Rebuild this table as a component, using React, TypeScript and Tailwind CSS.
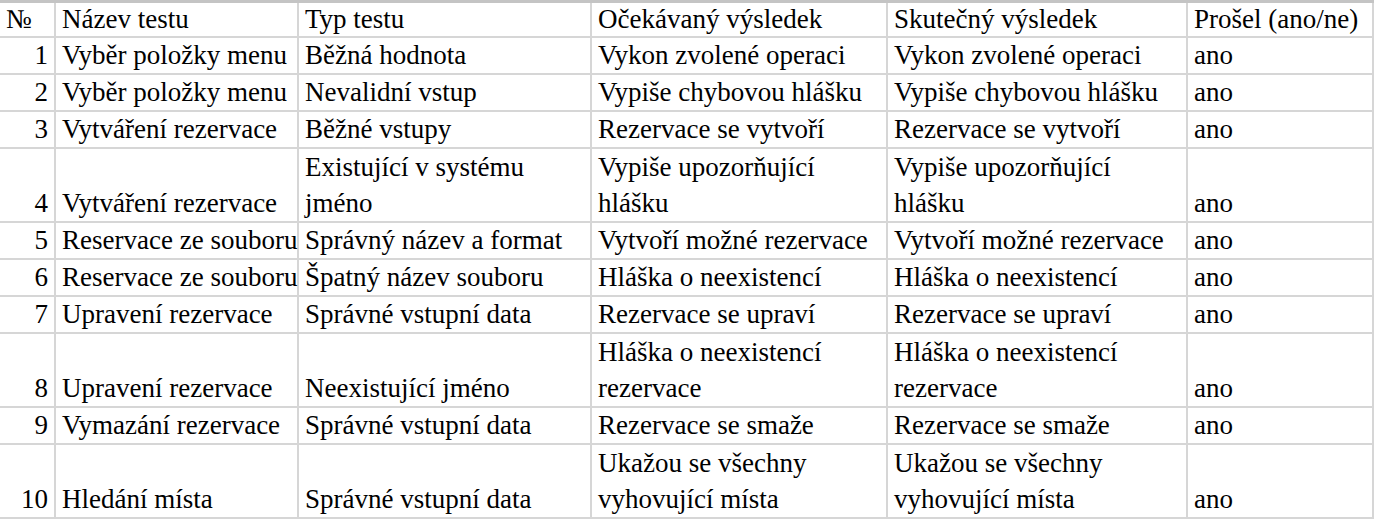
import React from 'react';

type Row = {
  n: number;
  name: string[];
  type: string[];
  expected: string[];
  actual: string[];
  passed: string;
};

const rows: Row[] = [
  { n: 1, name: ['Vyběr položky menu'], type: ['Běžná hodnota'], expected: ['Vykon zvolené operaci'], actual: ['Vykon zvolené operaci'], passed: 'ano' },
  { n: 2, name: ['Vyběr položky menu'], type: ['Nevalidní vstup'], expected: ['Vypiše chybovou hlášku'], actual: ['Vypiše chybovou hlášku'], passed: 'ano' },
  { n: 3, name: ['Vytváření rezervace'], type: ['Běžné vstupy'], expected: ['Rezervace se vytvoří'], actual: ['Rezervace se vytvoří'], passed: 'ano' },
  { n: 4, name: ['Vytváření rezervace'], type: ['Existující v systému', 'jméno'], expected: ['Vypiše upozorňující', 'hlášku'], actual: ['Vypiše upozorňující', 'hlášku'], passed: 'ano' },
  { n: 5, name: ['Reservace ze souboru'], type: ['Správný název a format'], expected: ['Vytvoří možné rezervace'], actual: ['Vytvoří možné rezervace'], passed: 'ano' },
  { n: 6, name: ['Reservace ze souboru'], type: ['Špatný název souboru'], expected: ['Hláška o neexistencí'], actual: ['Hláška o neexistencí'], passed: 'ano' },
  { n: 7, name: ['Upravení rezervace'], type: ['Správné vstupní data'], expected: ['Rezervace se upraví'], actual: ['Rezervace se upraví'], passed: 'ano' },
  { n: 8, name: ['Upravení rezervace'], type: ['Neexistující jméno'], expected: ['Hláška o neexistencí', 'rezervace'], actual: ['Hláška o neexistencí', 'rezervace'], passed: 'ano' },
  { n: 9, name: ['Vymazání rezervace'], type: ['Správné vstupní data'], expected: ['Rezervace se smaže'], actual: ['Rezervace se smaže'], passed: 'ano' },
  { n: 10, name: ['Hledání místa'], type: ['Správné vstupní data'], expected: ['Ukažou se všechny', 'vyhovující místa'], actual: ['Ukažou se všechny', 'vyhovující místa'], passed: 'ano' },
];

const Lines = ({ lines }: { lines: string[] }) => (
  <>
    {lines.map((l, i) => (
      <div key={i}>{l}</div>
    ))}
  </>
);

const cell = 'border-2 border-[#d6d6d6] align-bottom whitespace-nowrap px-[6px] py-0';

export default function App() {
  return (
    <div className="w-[1374px] h-[522px] bg-white overflow-hidden text-black text-[27px] font-serif">
      <table className="table-fixed border-collapse w-[1373px] font-[family-name:'Liberation_Serif','Tinos','Noto_Serif','FreeSerif','Times_New_Roman','Times','DejaVu_Serif',serif]">
        <colgroup>
          <col className="w-[55px]" />
          <col className="w-[243px]" />
          <col className="w-[293px]" />
          <col className="w-[296px]" />
          <col className="w-[300px]" />
          <col className="w-[186px]" />
        </colgroup>
        <thead>
          <tr className="leading-[33px]">
            {['№', 'Název testu', 'Typ testu', 'Očekávaný výsledek', 'Skutečný výsledek', 'Prošel (ano/ne)'].map((h, i) => (
              <th key={h} className={`${cell} font-normal text-left border-t-[3px] border-t-[#c4c4c4] ${i === 0 ? 'border-l-0' : ''}`}>
                {h}
              </th>
            ))}
          </tr>
        </thead>
        <tbody>
          {rows.map((r) => {
            const double = r.type.length > 1 || r.expected.length > 1;
            return (
              <tr key={r.n} className={double ? 'leading-[36px]' : 'leading-[35px]'}>
                <td className={`${cell} border-l-0 text-right`}>{r.n}</td>
                <td className={cell}><Lines lines={r.name} /></td>
                <td className={cell}><Lines lines={r.type} /></td>
                <td className={cell}><Lines lines={r.expected} /></td>
                <td className={cell}><Lines lines={r.actual} /></td>
                <td className={cell}>{r.passed}</td>
              </tr>
            );
          })}
        </tbody>
      </table>
    </div>
  );
}
